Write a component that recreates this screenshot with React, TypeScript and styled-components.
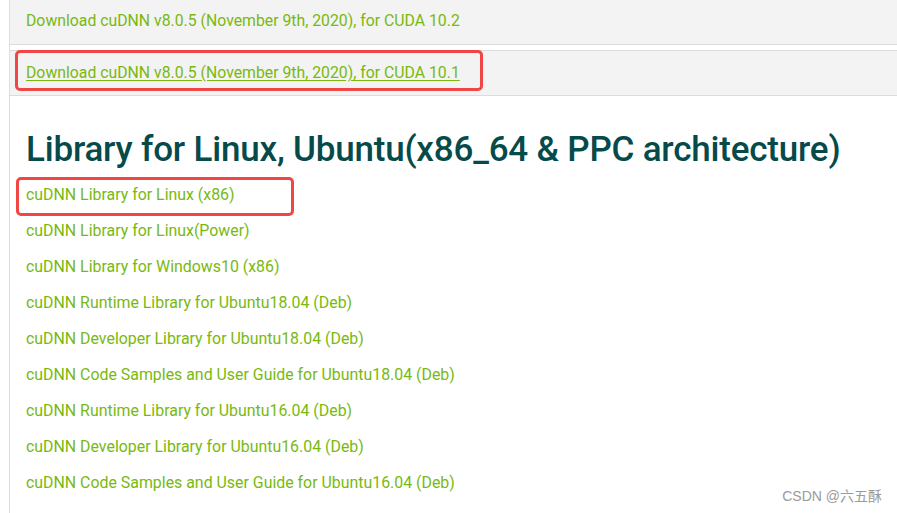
import React from "react";
import styled, { createGlobalStyle } from "styled-components";

const GlobalStyle = createGlobalStyle`
  html, body {
    margin: 0;
    padding: 0;
    background: #fff;
  }
  body {
    font-family: Roboto, "Liberation Sans", sans-serif;
    overflow: hidden;
  }
`;

const Page = styled.div`
  position: relative;
  width: 897px;
  height: 513px;
  overflow: hidden;
`;

const Column = styled.div`
  margin-left: 9px;
  border-left: 1px solid #dedede;
  height: 100%;
  display: flex;
  flex-direction: column;
`;

const Panel = styled.div<{ $top?: boolean }>`
  background: #f3f3f3;
  border-bottom: 1px solid #dcdcdc;
  border-top: ${($) => ($.$top ? "1px solid #dcdcdc" : "none")};
  margin-top: ${($) => ($.$top ? "5px" : "0")};
  height: ${($) => ($.$top ? "46px" : "45px")};
  flex-shrink: 0;
  display: flex;
  align-items: center;
  padding-left: 16px;
  box-sizing: border-box;
`;

const DownloadLink = styled.a<{ $underline?: boolean }>`
  color: #79b90f;
  font-size: 15.8px;
  text-decoration: ${($) => ($.$underline ? "underline" : "none")};
  text-underline-offset: 2px;
  margin-top: ${($) => ($.$underline ? "-1px" : "-4px")};
`;

const Body = styled.div`
  padding: 34px 0 0 16px;
`;

const Heading = styled.h2`
  margin: 0 0 7px 0;
  font-size: 35px;
  font-weight: 500;
  color: #064a4a;
  letter-spacing: -0.2px;
  line-height: 40px;
`;

const List = styled.ul`
  list-style: none;
  margin: 0;
  padding: 0;
`;

const Item = styled.li`
  height: 36px;
  line-height: 36px;
`;

const ItemLink = styled.a`
  color: #79b90f;
  font-size: 15.9px;
  text-decoration: none;
`;

const Mark = styled.div<{ $x: number; $y: number; $w: number; $h: number }>`
  position: absolute;
  left: ${($) => $.$x}px;
  top: ${($) => $.$y}px;
  width: ${($) => $.$w}px;
  height: ${($) => $.$h}px;
  border: 3px solid #f04646;
  border-radius: 5px;
  box-sizing: border-box;
  pointer-events: none;
`;

const Watermark = styled.div`
  position: absolute;
  right: 15px;
  bottom: 8px;
  font-family: "Liberation Sans", "Noto Sans CJK SC", sans-serif;
  font-size: 14px;
  color: #9a9a9a;
`;

const items = [
  "cuDNN Library for Linux (x86)",
  "cuDNN Library for Linux(Power)",
  "cuDNN Library for Windows10 (x86)",
  "cuDNN Runtime Library for Ubuntu18.04 (Deb)",
  "cuDNN Developer Library for Ubuntu18.04 (Deb)",
  "cuDNN Code Samples and User Guide for Ubuntu18.04 (Deb)",
  "cuDNN Runtime Library for Ubuntu16.04 (Deb)",
  "cuDNN Developer Library for Ubuntu16.04 (Deb)",
  "cuDNN Code Samples and User Guide for Ubuntu16.04 (Deb)",
];

export default function App() {
  return (
    <Page>
      <GlobalStyle />
      <Column>
        <Panel>
          <DownloadLink href="#">
            Download cuDNN v8.0.5 (November 9th, 2020), for CUDA 10.2
          </DownloadLink>
        </Panel>
        <Panel $top>
          <DownloadLink href="#" $underline>
            Download cuDNN v8.0.5 (November 9th, 2020), for CUDA 10.1
          </DownloadLink>
        </Panel>
        <Body>
          <Heading>Library for Linux, Ubuntu(x86_64 &amp; PPC architecture)</Heading>
          <List>
            {items.map((t) => (
              <Item key={t}>
                <ItemLink href="#">{t}</ItemLink>
              </Item>
            ))}
          </List>
        </Body>
      </Column>
      {/* annotation boxes */}
      <Mark $x={15} $y={50} $w={468} $h={41} />
      <Mark $x={16} $y={177} $w={278} $h={39} />
      <Watermark>CSDN @六五酥</Watermark>
    </Page>
  );
}
